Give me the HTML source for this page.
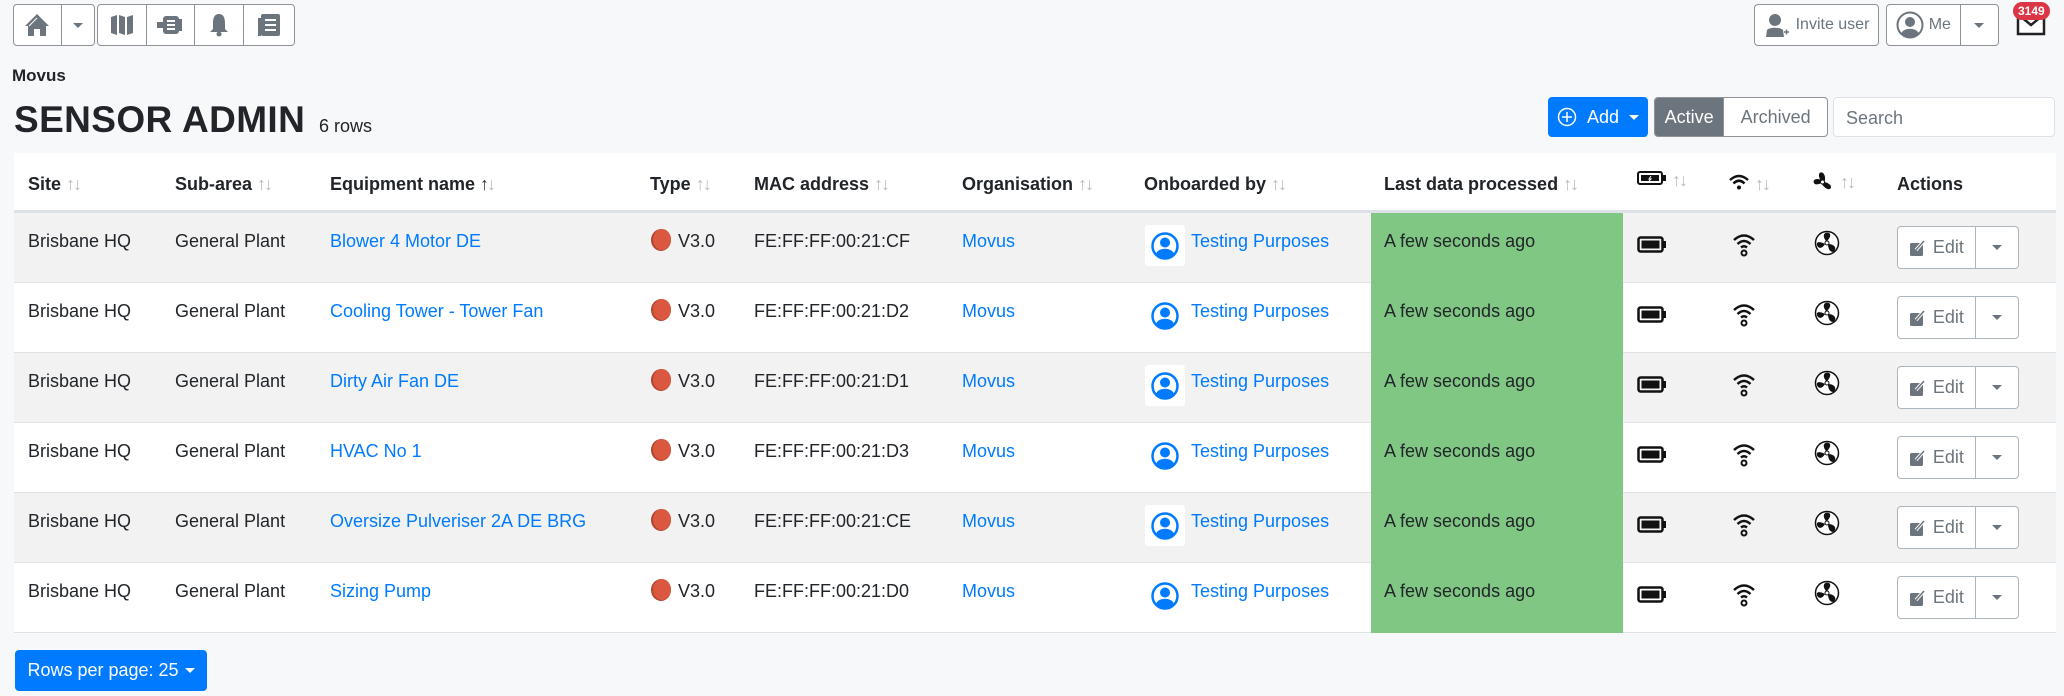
<!DOCTYPE html>
<html><head><meta charset="utf-8">
<style>
*{box-sizing:border-box;margin:0;padding:0}
body{width:2064px;height:696px;background:#f7f8fa;font-family:"Liberation Sans",Arial,sans-serif;color:#212529;position:relative;overflow:hidden;font-size:18px}
.a{position:absolute}
.btn{position:absolute;border:1px solid #8f9296;border-radius:4px;background:#fff;display:flex;align-items:center;justify-content:center;color:#6c757d}
.grp{position:absolute;display:flex;border:1px solid #8f9296;border-radius:4px;background:#fff;overflow:hidden}
.grp>div{display:flex;align-items:center;justify-content:center;border-right:1px solid #8f9296;height:100%}
.grp>div:last-child{border-right:none}
.car{width:0;height:0;border-left:5px solid transparent;border-right:5px solid transparent;border-top:5px solid currentColor}
.tbl{position:absolute;left:14px;top:153px;width:2042px;height:479px;background:#fff}
.hd{position:absolute;top:0;height:60px;border-bottom:3px solid #dee2e6;width:100%}
.th{position:absolute;top:21px;font-weight:bold;font-size:18px}
.s{color:#b8bcc0;font-weight:normal;letter-spacing:-2px}
.row{position:absolute;left:0;width:100%;height:70px;border-bottom:1px solid #dee2e6}
.row>.a{top:18px}
.lk{color:#007bff}
.green{position:absolute;top:0;height:70px;left:1357px;width:252px;background:#81c784}
</style></head><body>
<div class="grp" style="left:13px;top:4px;width:82px;height:42px"><div style="width:49px"><svg width="26" height="24" viewBox="0 0 26 24"><path d="M13 1 L1 13 L4 13 L4 23 L10 23 L10 16 L16 16 L16 23 L22 23 L22 13 L25 13 Z" fill="#6c757d"/><path d="M13 5 L5 13" stroke="#fff" stroke-width="1"/></svg></div><div style="width:33px;color:#6c757d"><div class="car"></div></div></div>
<div class="grp" style="left:97px;top:4px;width:198px;height:42px">
<div style="width:49px"><svg width="24" height="22" viewBox="0 0 24 22"><path d="M1 3 L7 1 L7 21 L1 19Z M9 1 L15 3 L15 21 L9 19Z M17 3 L23 1 L23 19 L17 21Z" fill="#6c757d"/></svg></div>
<div style="width:49px"><svg width="28" height="22" viewBox="0 0 28 22"><rect x="7" y="2" width="16" height="18" rx="3" fill="#6c757d"/><rect x="1" y="8" width="6" height="6" fill="#6c757d"/><rect x="11" y="6" width="8" height="2" fill="#fff"/><rect x="11" y="10" width="8" height="2" fill="#fff"/><rect x="11" y="14" width="8" height="2" fill="#fff"/><rect x="23" y="5" width="3" height="12" fill="#6c757d"/></svg></div>
<div style="width:49px"><svg width="20" height="24" viewBox="0 0 20 24"><path d="M10 1 C5 1 4 6 4 10 L4 16 L1 19 L19 19 L16 16 L16 10 C16 6 15 1 10 1Z" fill="#6c757d"/><circle cx="10" cy="21" r="2.5" fill="#6c757d"/></svg></div>
<div style="width:51px"><svg width="24" height="24" viewBox="0 0 24 24"><rect x="4" y="1" width="19" height="22" rx="2" fill="#6c757d"/><rect x="1" y="5" width="3" height="18" fill="#6c757d"/><rect x="8" y="6" width="11" height="2" fill="#fff"/><rect x="8" y="11" width="11" height="2" fill="#fff"/><rect x="8" y="16" width="11" height="2" fill="#fff"/></svg></div>
</div>
<div class="btn" style="left:1754px;top:4px;width:125px;height:42px;font-size:16px"><svg width="26" height="26" viewBox="0 0 26 26" style="margin-right:6px"><circle cx="11" cy="8" r="6" fill="#6c757d"/><path d="M2 25 L3 18 C5 15 17 15 19 18 L20 25Z" fill="#6c757d"/><path d="M20 20h5M22.5 17.5v5" stroke="#6c757d" stroke-width="1.5"/></svg>Invite user</div>
<div class="grp" style="left:1886px;top:4px;width:113px;height:42px"><div style="width:75px;color:#6c757d;font-size:16px"><svg width="28" height="28" viewBox="0 0 28 28" style="margin-right:5px"><circle cx="14" cy="14" r="12.5" fill="none" stroke="#6c757d" stroke-width="2"/><circle cx="14" cy="11" r="5" fill="#6c757d"/><path d="M5 23 C7 16 21 16 23 23 C19 27 9 27 5 23Z" fill="#6c757d"/></svg>Me</div><div style="width:38px;color:#6c757d"><div class="car"></div></div></div>
<svg class="a" style="left:2016px;top:10px" width="30" height="26" viewBox="0 0 30 26"><rect x="2" y="4" width="26" height="20" fill="#fff" stroke="#222" stroke-width="2.5"/><path d="M4 6 L15 15 L26 6" fill="none" stroke="#222" stroke-width="2.5"/></svg>
<div class="a" style="left:2013px;top:2px;background:#dc3545;color:#fff;font-weight:bold;font-size:12px;padding:2px 5px;border-radius:9px">3149</div>

<div class="a" style="left:12px;top:66px;font-weight:bold;font-size:17px">Movus</div>
<div class="a" style="left:14px;top:99px;font-weight:bold;font-size:37px;letter-spacing:0.4px">SENSOR ADMIN</div>
<div class="a" style="left:319px;top:116px;font-size:18px">6 rows</div>

<div class="btn" style="left:1548px;top:97px;width:100px;height:40px;background:#007bff;border-color:#007bff;color:#fff;font-size:18px"><svg width="20" height="20" viewBox="0 0 20 20" style="margin-right:10px"><circle cx="10" cy="10" r="8.5" fill="none" stroke="#fff" stroke-width="1.5"/><path d="M10 5v10M5 10h10" stroke="#fff" stroke-width="1.5"/></svg>Add<div class="car" style="margin-left:10px"></div></div>
<div class="grp" style="left:1654px;top:97px;width:174px;height:40px;font-size:18px"><div style="width:70px;background:#6c757d;color:#fff">Active</div><div style="width:104px;color:#6c757d">Archived</div></div>
<div class="a" style="left:1833px;top:97px;width:222px;height:40px;background:#fff;border:1px solid #dee2e6;border-radius:4px;color:#6c757d;padding:10px 12px;font-size:18px">Search</div>

<div class="tbl">
<div class="hd">
<div class="th" style="left:14px">Site <span class="s">↑↓</span></div>
<div class="th" style="left:161px">Sub-area <span class="s">↑↓</span></div>
<div class="th" style="left:316px">Equipment name <span class="s" style="color:#333">↑</span><span class="s">↓</span></div>
<div class="th" style="left:636px">Type <span class="s">↑↓</span></div>
<div class="th" style="left:740px">MAC address <span class="s">↑↓</span></div>
<div class="th" style="left:948px">Organisation <span class="s">↑↓</span></div>
<div class="th" style="left:1130px">Onboarded by <span class="s">↑↓</span></div>
<div class="th" style="left:1370px">Last data processed <span class="s">↑↓</span></div>
<div class="th" style="left:1623px;top:17px"><svg width="30" height="16" viewBox="0 0 30 16"><rect x="1" y="2" width="24" height="12" rx="2" fill="none" stroke="#111" stroke-width="2"/><rect x="4" y="5" width="18" height="6" fill="#111"/><rect x="26" y="5" width="3" height="6" fill="#111"/><path d="M14 6 L12 9 L14 9 L12 11" stroke="#fff" stroke-width="1" fill="none"/></svg> <span class="s">↑↓</span></div>
<div class="th" style="left:1714px"><svg width="22" height="16" viewBox="0 0 22 16"><path d="M2 6 Q11 -2 20 6" fill="none" stroke="#111" stroke-width="2.5"/><path d="M5.5 9.5 Q11 4 16.5 9.5" fill="none" stroke="#111" stroke-width="2.5"/><circle cx="11" cy="13.5" r="2" fill="#111"/></svg> <span class="s">↑↓</span></div>
<div class="th" style="left:1797px;top:18px;display:flex;align-items:center"><svg width="24" height="22" viewBox="0 0 24 22"><path d="M11 10 C5 0 14 0 13 9Z M13 12 C23 14 19 22 12 13Z M10 11 C2 16 1 6 10 10Z" fill="#111" stroke="#111" stroke-width="2"/><circle cx="11.5" cy="11" r="2" fill="#fff" stroke="#111"/></svg>&nbsp;<span class="s">↑↓</span></div>
<div class="th" style="left:1883px">Actions</div>
</div>
</div>

<div class="btn" style="left:15px;top:650px;width:192px;height:41px;background:#007bff;border-color:#007bff;color:#fff;font-size:18px">Rows per page: 25<div class="car" style="margin-left:6px"></div></div>

<script>
var names=["Blower 4 Motor DE","Cooling Tower - Tower Fan","Dirty Air Fan DE","HVAC No 1","Oversize Pulveriser 2A DE BRG","Sizing Pump"];
var macs=["CF","D2","D1","D3","CE","D0"];
var h="";
for(var i=0;i<6;i++){
 var bg=i%2==0?"#f2f2f2":"#fff";
 h+='<div class="row" style="top:'+(60+i*70)+'px;background:'+bg+'">'+
 '<div class="green"></div>'+
 '<div class="a" style="left:14px">Brisbane HQ</div>'+
 '<div class="a" style="left:161px">General Plant</div>'+
 '<div class="a lk" style="left:316px">'+names[i]+'</div>'+
 '<svg class="a" style="left:636px;top:15px" width="22" height="24" viewBox="0 0 22 24"><ellipse cx="11" cy="12" rx="10" ry="11" fill="#b2452f"/><ellipse cx="12" cy="11.5" rx="9" ry="10.5" fill="#d9583f"/></svg>'+
 '<div class="a" style="left:664px">V3.0</div>'+
 '<div class="a" style="left:740px">FE:FF:FF:00:21:'+macs[i]+'</div>'+
 '<div class="a lk" style="left:948px">Movus</div>'+
 '<div class="a" style="left:1131px;top:12px;width:40px;height:41px;background:#fff;border-radius:3px;display:flex;align-items:center;justify-content:center"><svg width="28" height="28" viewBox="0 0 28 28"><circle cx="14" cy="14" r="12.5" fill="none" stroke="#007bff" stroke-width="2.5"/><circle cx="14" cy="10.5" r="5" fill="#007bff"/><path d="M5 22 C7 15 21 15 23 22 C19 27 9 27 5 22Z" fill="#007bff"/></svg></div>'+
 '<div class="a lk" style="left:1177px">Testing Purposes</div>'+
 '<div class="a" style="left:1370px">A few seconds ago</div>'+
 '<svg class="a" style="left:1623px;top:23px" width="30" height="18" viewBox="0 0 30 18"><rect x="1.5" y="1.5" width="24" height="14" rx="2" fill="none" stroke="#111" stroke-width="2.5"/><rect x="4.5" y="4.5" width="18" height="8" fill="#111"/><rect x="26" y="5" width="3" height="7" fill="#111"/></svg>'+
 '<svg class="a" style="left:1718px;top:18px" width="24" height="26" viewBox="0 0 24 26"><path d="M2 9 Q12 0 22 9" fill="none" stroke="#111" stroke-width="2.5"/><path d="M5.5 13 Q12 7 18.5 13" fill="none" stroke="#111" stroke-width="2.5"/><path d="M9 16.5 Q12 14 15 16.5" fill="none" stroke="#111" stroke-width="2.5"/><circle cx="12" cy="22" r="2.5" fill="none" stroke="#111" stroke-width="2"/></svg>'+
 '<svg class="a" style="left:1800px;top:17px" width="26" height="26" viewBox="0 0 26 26"><circle cx="13" cy="13" r="11.5" fill="#fff" stroke="#111" stroke-width="1.5"/><path d="M12 11 C6 3 14 1 16 4 C17 7 14 10 13 11Z M14 14 C22 14 23 20 19 22 C15 22 14 17 14 14Z M11 14 C7 21 2 17 3 13 C5 11 9 13 11 14Z" fill="#111"/><circle cx="13" cy="13" r="2" fill="#fff" stroke="#111"/></svg>'+
 '<div class="grp" style="left:1883px;top:13px;width:122px;height:43px;border-color:#adb5bd"><div style="width:79px;color:#6c757d;font-size:18px;border-color:#adb5bd"><svg width="18" height="18" viewBox="0 0 18 18" style="margin-right:6px"><rect x="1" y="4" width="13" height="13" rx="1.5" fill="#6c757d"/><path d="M7 11 L15 2" stroke="#fff" stroke-width="3.5"/><path d="M7 11 L15 2" stroke="#6c757d" stroke-width="1.5"/></svg>Edit</div><div style="width:43px;color:#6c757d"><div class="car"></div></div></div>'+
 '</div>';
}
document.querySelector('.tbl').insertAdjacentHTML('beforeend',h);
</script>
</body></html>
